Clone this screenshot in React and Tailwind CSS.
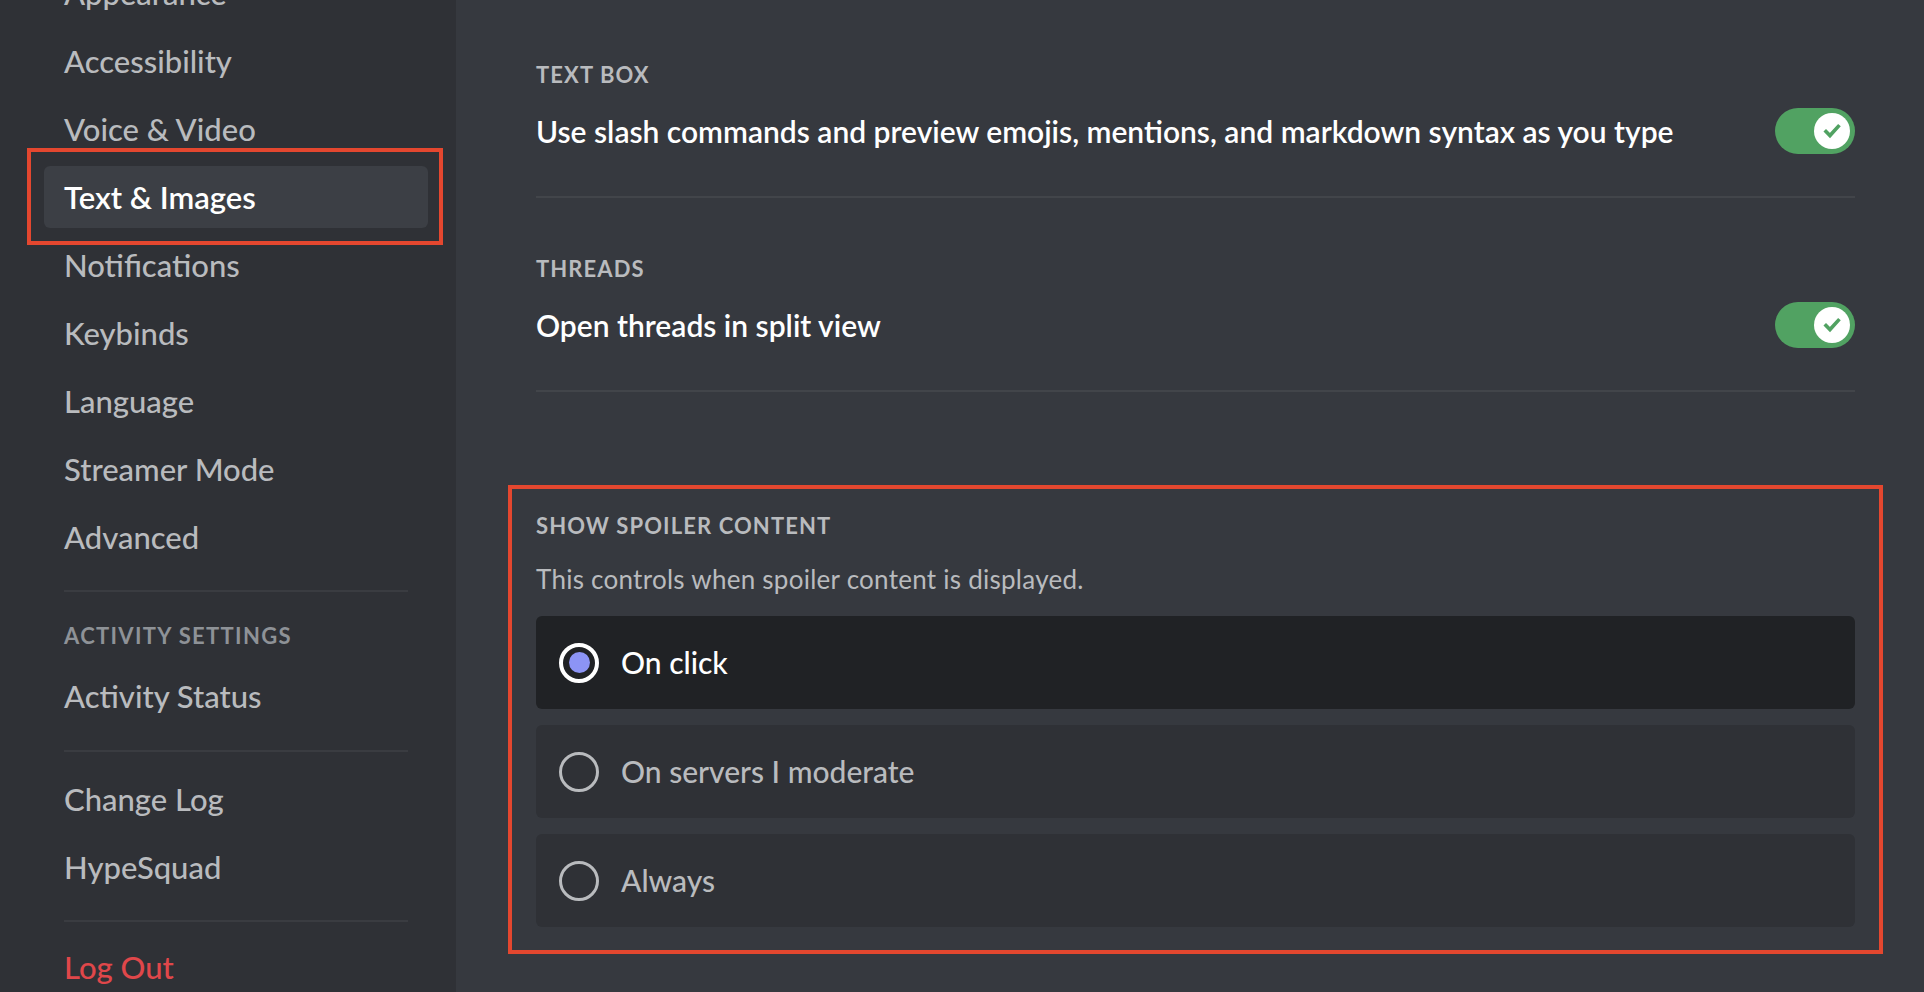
import React, { useState } from "react";

const mainNav = [
  "Appearance",
  "Accessibility",
  "Voice & Video",
  "Text & Images",
  "Notifications",
  "Keybinds",
  "Language",
  "Streamer Mode",
  "Advanced",
];

const NavItem = ({ label, selected, danger }) => (
  <div
    className={`h-[62px] flex items-center px-[20px] rounded-[6px] text-[31px] whitespace-nowrap ${
      selected
        ? "bg-[#3c3f45] text-white font-semibold"
        : danger
        ? "text-[#e0474a] font-medium"
        : "text-[#b9bbbe] font-medium"
    }`}
  >
    {label}
  </div>
);

const Divider = ({ className }) => (
  <div className={`mx-[20px] h-[2px] bg-[#3a3c41] ${className}`} />
);

const Toggle = () => (
  <div className="w-[80px] h-[46px] rounded-full bg-[#51a262] flex items-center justify-end pr-[5px] shrink-0">
    <div className="w-[36px] h-[36px] rounded-full bg-white flex items-center justify-center">
      <svg width="24" height="24" viewBox="0 0 20 20" fill="none">
        <path
          d="M5 10.5l3.3 3.3L15.2 6.2"
          stroke="#51a262"
          strokeWidth="3"
          strokeLinecap="square"
        />
      </svg>
    </div>
  </div>
);

const Radio = ({ checked }) =>
  checked ? (
    <div className="w-[40px] h-[40px] rounded-full border-[4px] border-white flex items-center justify-center shrink-0">
      <div className="w-[21px] h-[21px] rounded-full bg-[#8c94f5]" />
    </div>
  ) : (
    <div className="w-[40px] h-[40px] rounded-full border-[3px] border-[#b9bbbe] shrink-0" />
  );

const options = ["On click", "On servers I moderate", "Always"];

export default function App() {
  const [spoiler, setSpoiler] = useState("On click");

  return (
    <div className="flex w-[1924px] h-[992px] overflow-hidden bg-[#36393f] font-['Lato','Open_Sans',sans-serif]">
      {/* Sidebar */}
      <div className="w-[456px] shrink-0 bg-[#2f3136] pl-[44px] pr-[28px] overflow-hidden">
        <div className="-mt-[38px] flex flex-col gap-[6px]">
          {mainNav.map((item) =>
            item === "Text & Images" ? (
              <div key={item} className="relative">
                <NavItem label={item} selected />
                <div className="absolute -left-[17px] -right-[15px] -top-[18px] -bottom-[17px] border-[4px] border-[#e4472f] pointer-events-none" />
              </div>
            ) : (
              <NavItem key={item} label={item} />
            )
          )}
        </div>
        <Divider className="mt-[22px]" />
        <div className="mt-[31px] px-[20px] h-[26px] leading-[26px] text-[22px] tracking-[0.06em] font-bold uppercase text-[#8e9297]">
          Activity Settings
        </div>
        <div className="mt-[16px]">
          <NavItem label="Activity Status" />
        </div>
        <Divider className="mt-[23px]" />
        <div className="mt-[16px] flex flex-col gap-[6px]">
          <NavItem label="Change Log" />
          <NavItem label="HypeSquad" />
        </div>
        <Divider className="mt-[22px]" />
        <div className="mt-[14px]">
          <NavItem label="Log Out" danger />
        </div>
      </div>

      {/* Main */}
      <div className="flex-1 overflow-hidden">
        <div className="ml-[80px] w-[1319px] pt-[62px]">
          {/* Text box */}
          <div>
            <h2 className="text-[22px] leading-[26px] tracking-[0.05em] font-bold uppercase text-[#b9bbbe]">
              Text Box
            </h2>
            <div className="mt-[20px] flex items-center justify-between">
              <span className="text-[30px] leading-[36px] font-semibold text-white">
                Use slash commands and preview emojis, mentions, and markdown syntax as you type
              </span>
              <Toggle />
            </div>
            <div className="mt-[42px] h-[2px] bg-[#42454a]" />
          </div>

          {/* Threads */}
          <div className="mt-[58px]">
            <h2 className="text-[22px] leading-[26px] tracking-[0.05em] font-bold uppercase text-[#b9bbbe]">
              Threads
            </h2>
            <div className="mt-[20px] flex items-center justify-between">
              <span className="text-[30px] leading-[36px] font-semibold text-white">
                Open threads in split view
              </span>
              <Toggle />
            </div>
            <div className="mt-[42px] h-[2px] bg-[#42454a]" />
          </div>

          {/* Spoiler content */}
          <div className="mt-[93px] -mx-[28px] border-[4px] border-[#e4472f] px-[24px] pt-[24px] pb-[23px]">
            <h2 className="text-[22px] leading-[26px] tracking-[0.05em] font-bold uppercase text-[#b9bbbe]">
              Show Spoiler Content
            </h2>
            <p className="mt-[25px] text-[26px] leading-[31px] tracking-[0.01em] text-[#b9bbbe]">
              This controls when spoiler content is displayed.
            </p>
            <div className="mt-[21px] flex flex-col gap-[16px]">
              {options.map((opt) => {
                const checked = spoiler === opt;
                return (
                  <div
                    key={opt}
                    onClick={() => setSpoiler(opt)}
                    className={`h-[93px] rounded-[6px] flex items-center gap-[22px] px-[23px] cursor-pointer ${
                      checked ? "bg-[#202225]" : "bg-[#2f3136]"
                    }`}
                  >
                    <Radio checked={checked} />
                    <span
                      className={`text-[30px] font-medium ${
                        checked ? "text-white" : "text-[#b9bbbe]"
                      }`}
                    >
                      {opt}
                    </span>
                  </div>
                );
              })}
            </div>
          </div>
        </div>
      </div>
    </div>
  );
}
